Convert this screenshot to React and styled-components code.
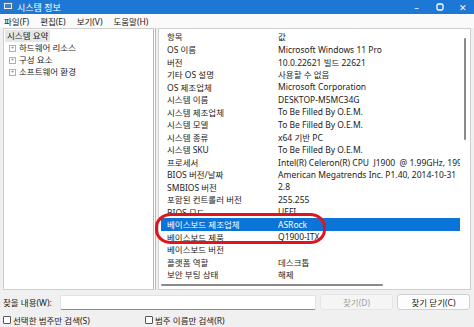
import React from 'react';
import styled, { createGlobalStyle } from 'styled-components';

const rows = [
  ['OS 이름', 'Microsoft Windows 11 Pro'],
  ['버전', '10.0.22621 빌드 22621'],
  ['기타 OS 설명', '사용할 수 없음'],
  ['OS 제조업체', 'Microsoft Corporation'],
  ['시스템 이름', 'DESKTOP-M5MC34G'],
  ['시스템 제조업체', 'To Be Filled By O.E.M.'],
  ['시스템 모델', 'To Be Filled By O.E.M.'],
  ['시스템 종류', 'x64 기반 PC'],
  ['시스템 SKU', 'To Be Filled By O.E.M.'],
  ['프로세서', 'Intel(R) Celeron(R) CPU  J1900  @ 1.99GHz, 1993Mhz, 코어 4개'],
  ['BIOS 버전/날짜', 'American Megatrends Inc. P1.40, 2014-10-31'],
  ['SMBIOS 버전', '2.8'],
  ['포함된 컨트롤러 버전', '255.255'],
  ['BIOS 모드', 'UEFI'],
  ['베이스보드 제조업체', 'ASRock'],
  ['베이스보드 제품', 'Q1900-ITX'],
  ['베이스보드 버전', ''],
  ['플랫폼 역할', '데스크톱'],
  ['보안 부팅 상태', '해제'],
];

const tree = ['하드웨어 리소스', '구성 요소', '소프트웨어 환경'];

const App = () => {
  return (
    <Window>
      <GlobalStyle />
      <TitleBar>
        <svg width="10" height="10" viewBox="0 0 10 10">
          <rect x="0.5" y="0.5" width="9" height="7" rx="1" fill="#e8eef7" stroke="#5a6b85" />
          <rect x="2" y="2" width="6" height="4" fill="#3b7fd0" />
          <rect x="3" y="8" width="4" height="1.5" fill="#5a6b85" />
        </svg>
        <Title>시스템 정보</Title>
        <Controls>
          <Ctrl>–</Ctrl>
          <Ctrl>
            <svg width="8" height="8" viewBox="0 0 8 8">
              <rect x="1" y="1" width="6" height="6" rx="1.5" fill="none" stroke="#fff" strokeWidth="1.3" />
            </svg>
          </Ctrl>
          <Ctrl>✕</Ctrl>
        </Controls>
      </TitleBar>
      <MenuBar>
        <MenuItem>파일(F)</MenuItem>
        <MenuItem>편집(E)</MenuItem>
        <MenuItem>보기(V)</MenuItem>
        <MenuItem>도움말(H)</MenuItem>
      </MenuBar>
      <Main>
        <LeftPanel>
          <TreeRoot>시스템 요약</TreeRoot>
          {tree.map((t) => (
            <TreeItem key={t}>
              <Plus>+</Plus>
              {t}
            </TreeItem>
          ))}
        </LeftPanel>
        <RightPanel>
          <TableArea>
            <Table>
              <HeaderRow>
                <ColName>항목</ColName>
                <ColValue>값</ColValue>
              </HeaderRow>
              {rows.map(([k, v], i) => (
                <Row key={i} $selected={i === 14}>
                  <ColName>{k}</ColName>
                  <ColValue>{v}</ColValue>
                </Row>
              ))}
            </Table>
            <VScroll>
              <VThumb />
            </VScroll>
          </TableArea>
          <HScroll>
            <HThumb />
          </HScroll>
          <Marker />
        </RightPanel>
      </Main>
      <FindRow>
        <Label>찾을 내용(W):</Label>
        <Input />
        <Button $disabled>찾기(D)</Button>
        <Button>찾기 닫기(C)</Button>
      </FindRow>
      <CheckRow>
        <Check><Box />선택한 범주만 검색(S)</Check>
        <Check><Box />범주 이름만 검색(R)</Check>
      </CheckRow>
    </Window>
  );
};

export default App;

const GlobalStyle = createGlobalStyle`
  html, body { margin: 0; padding: 0; background: #f0f0f0; overflow: hidden; }
  * { box-sizing: border-box; }
`;

const Window = styled.div`
  width: 474px;
  height: 327px;
  display: flex;
  flex-direction: column;
  background: #f0f0f0;
  font-family: "Noto Sans", "Noto Sans CJK KR", sans-serif;
  font-size: 8.5px;
  color: #222;
  overflow: hidden;
`;

const TitleBar = styled.div`
  height: 14px;
  background: #1c78d4;
  display: flex;
  align-items: center;
  padding-left: 3px;
  color: #fff;
`;

const Title = styled.span`
  margin-left: 4px;
  font-size: 9px;
`;

const Controls = styled.div`
  margin-left: auto;
  display: flex;
  height: 100%;
`;

const Ctrl = styled.div`
  width: 23px;
  display: flex;
  align-items: center;
  justify-content: center;
  font-size: 9px;
  color: #fff;
`;

const MenuBar = styled.div`
  height: 14px;
  background: #fafafa;
  display: flex;
  align-items: center;
  padding-left: 4px;
  gap: 11px;
`;

const MenuItem = styled.span`
  font-size: 8.5px;
`;

const Main = styled.div`
  height: 262px;
  display: flex;
  padding: 0 3px;
  gap: 2px;
`;

const LeftPanel = styled.div`
  width: 153px;
  flex-shrink: 0;
  background: #fff;
  border: 1px solid #cfcfcf;
  border-right: 3px double #b8b8b8;
  padding-top: 1px;
`;

const TreeRoot = styled.div`
  height: 12px;
  line-height: 12px;
  padding: 0 2px;
  margin-left: 1px;
  display: inline-block;
  background: #e6e6e6;
`;

const TreeItem = styled.div`
  height: 12px;
  line-height: 12px;
  display: flex;
  align-items: center;
  padding-left: 5px;
`;

const Plus = styled.span`
  width: 7px;
  height: 7px;
  border: 1px solid #b0b0b0;
  font-size: 6px;
  line-height: 5px;
  text-align: center;
  color: #777;
  margin-right: 3px;
`;

const RightPanel = styled.div`
  flex: 1;
  min-width: 0;
  position: relative;
  background: #fff;
  border: 1px solid #cfcfcf;
  display: flex;
  flex-direction: column;
`;

const TableArea = styled.div`
  flex: 1;
  min-height: 0;
  display: flex;
  overflow: hidden;
`;

const Table = styled.div`
  flex: 1;
  min-width: 0;
  padding-left: 2px;
  overflow: hidden;
`;

const HeaderRow = styled.div`
  height: 14px;
  display: flex;
  align-items: center;
`;

const Row = styled.div`
  height: 12.5px;
  display: flex;
  align-items: center;
  white-space: pre;
  background: ${(p) => (p.$selected ? '#0a74d8' : 'transparent')};
  color: ${(p) => (p.$selected ? '#fff' : '#222')};
`;

const ColName = styled.div`
  width: 117px;
  flex-shrink: 0;
  padding-left: 6px;
`;

const ColValue = styled.div`
  flex: 1;
  min-width: 0;
  overflow: hidden;
`;

const VScroll = styled.div`
  width: 10px;
  flex-shrink: 0;
  padding-top: 9px;
  display: flex;
  justify-content: center;
`;

const VThumb = styled.div`
  width: 2px;
  height: 102px;
  background: #8a8a8a;
  border-radius: 1px;
`;

const HScroll = styled.div`
  height: 9px;
  display: flex;
  align-items: center;
  padding-left: 2px;
`;

const HThumb = styled.div`
  width: 222px;
  height: 2px;
  background: #8a8a8a;
  border-radius: 1px;
`;

const Marker = styled.div`
  position: absolute;
  left: -4px;
  top: 184px;
  width: 171px;
  height: 31px;
  border: 3px solid #e0141e;
  border-radius: 16px / 14px;
  pointer-events: none;
`;

const FindRow = styled.div`
  height: 20px;
  display: flex;
  align-items: center;
  padding: 0 4px 0 3px;
  margin-top: 2px;
`;

const Label = styled.span`
  width: 57px;
`;

const Input = styled.div`
  width: 256px;
  height: 15px;
  background: #fff;
  border: 1px solid #e2e2e2;
  border-bottom: 1px solid #8a8a8a;
  border-radius: 2px;
`;

const Button = styled.div`
  width: 73px;
  height: 16px;
  margin-left: 4px;
  display: flex;
  align-items: center;
  justify-content: center;
  background: ${(p) => (p.$disabled ? '#f5f5f5' : '#fdfdfd')};
  border: 1px solid ${(p) => (p.$disabled ? '#e5e5e5' : '#d0d0d0')};
  border-radius: 3px;
  color: ${(p) => (p.$disabled ? '#a0a0a0' : '#222')};
`;

const CheckRow = styled.div`
  flex: 1;
  display: flex;
  align-items: center;
  padding-left: 3px;
`;

const Check = styled.div`
  width: 142px;
  display: flex;
  align-items: center;
`;

const Box = styled.span`
  width: 8px;
  height: 8px;
  border: 1px solid #555;
  border-radius: 1px;
  margin-right: 2px;
  background: #fff;
`;
